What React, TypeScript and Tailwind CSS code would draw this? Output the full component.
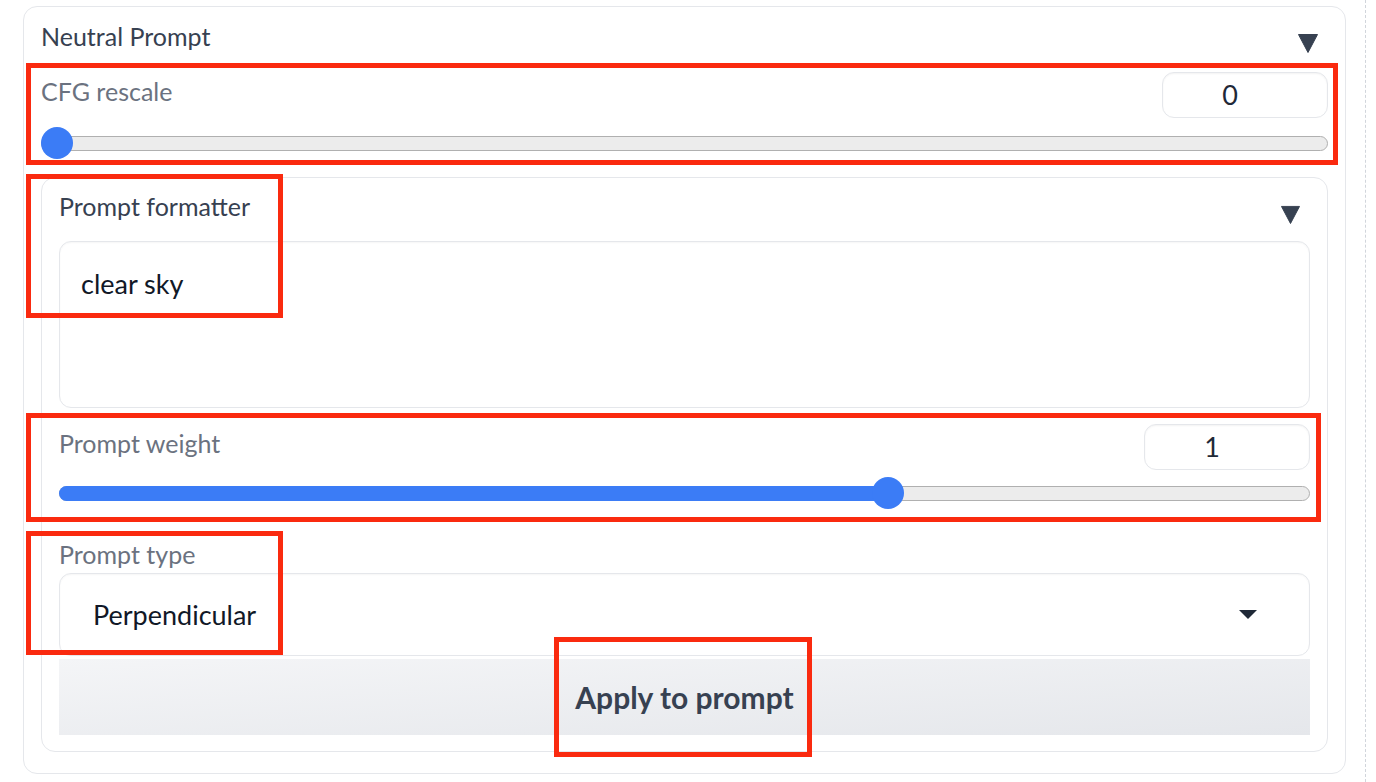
import React from 'react';

const Caret = ({ className }: { className?: string }) => (
  <svg viewBox="0 0 20 20" className={className}>
    <polygon points="0.5,1.5 19.5,1.5 10,19.5" fill="#374151" strokeLinejoin="round" stroke="#374151" strokeWidth="1" />
  </svg>
);

const NumberBox = ({ value }: { value: string }) => (
  <div className="w-[166px] h-[46px] rounded-[12px] border border-[#e5e7eb] shadow-[inset_0_1px_2px_rgba(0,0,0,0.05)] flex items-center justify-center pr-[30px] text-[27px] text-[#1f2937]">
    {value}
  </div>
);

const Slider = ({ pct }: { pct: number }) => (
  <div className="relative h-[32px] flex items-center">
    <div className="w-full h-[15px] rounded-full bg-[#ececec] border-[1.5px] border-[#b0b0b0]" />
    {pct > 0 && (
      <div
        className="absolute left-0 h-[15px] rounded-full bg-[#3b7cf6]"
        style={{ width: `calc(16px + (100% - 32px) * ${pct})` }}
      />
    )}
    <div
      className="absolute top-0 w-[32px] h-[32px] rounded-full bg-[#3b7cf6]"
      style={{ left: `calc((100% - 32px) * ${pct})` }}
    />
  </div>
);

const App: React.FC = () => {
  return (
    <div className="relative w-[1376px] h-[782px] bg-white overflow-hidden font-[Lato,sans-serif] flex">
      <div className="ml-[23px] mt-[6px] self-start w-[1323px] border border-[#e5e7eb] rounded-[14px] px-[17px] pb-[21px] flex flex-col">
        {/* Neutral Prompt header */}
        <div className="flex justify-between h-[58px]">
          <span className="mt-[14px] leading-[30px] text-[25px] text-[#374151]">Neutral Prompt</span>
          <Caret className="w-[20px] h-[20px] mt-[26px] mr-[10px]" />
        </div>

        {/* CFG rescale */}
        <div className="mt-[7px] flex justify-between h-[46px]">
          <span className="mt-[4px] leading-[30px] text-[25px] text-[#6b7280]">CFG rescale</span>
          <NumberBox value="0" />
        </div>
        <div className="mt-[9px]">
          <Slider pct={0} />
        </div>

        {/* Prompt formatter */}
        <div className="mt-[18px] border border-[#e5e7eb] rounded-[14px] px-[17px] pb-[16px] flex flex-col">
          <div className="flex justify-between h-[63px]">
            <span className="mt-[13px] leading-[30px] text-[25px] text-[#374151]">Prompt formatter</span>
            <Caret className="w-[19px] h-[19px] mt-[27px] mr-[10px]" />
          </div>
          <div className="h-[167px] rounded-[12px] border border-[#e5e7eb] shadow-[inset_0_1px_2px_rgba(0,0,0,0.04)] pl-[21px] pt-[27px] text-[27px] leading-[30px] text-[#111827]">
            clear sky
          </div>

          <div className="mt-[16px] flex justify-between h-[46px]">
            <span className="mt-[4px] leading-[30px] text-[25px] text-[#6b7280]">Prompt weight</span>
            <NumberBox value="1" />
          </div>
          <div className="mt-[7px]">
            <Slider pct={0.667} />
          </div>

          <span className="mt-[30px] leading-[30px] text-[25px] text-[#6b7280]">Prompt type</span>
          <div className="mt-[4px] h-[83px] rounded-[12px] border border-[#e5e7eb] shadow-[inset_0_1px_2px_rgba(0,0,0,0.04)] flex items-center justify-between pl-[33px]">
            <span className="text-[27px] leading-[30px] text-[#111827]">Perpendicular</span>
            <svg viewBox="0 0 18 9" className="w-[18px] h-[9px] mr-[52px]">
              <polygon points="0,0 18,0 9,9" fill="#1f2937" />
            </svg>
          </div>
          <button className="mt-[3px] h-[76px] bg-gradient-to-br from-[#f4f5f7] to-[#e5e7eb] text-[30px] font-bold text-[#374151]">
            Apply to prompt
          </button>
        </div>
      </div>

      {/* dashed column divider */}
      <div className="ml-[19px] w-0 h-full border-l border-dashed border-[#d1d5db]" />

      {/* red annotation boxes */}
      <div className="absolute left-[26px] top-[63px] w-[1312px] h-[102px] border-[5px] border-[#fa2a0f]" />
      <div className="absolute left-[26px] top-[174px] w-[257px] h-[144px] border-[5px] border-[#fa2a0f]" />
      <div className="absolute left-[26px] top-[413px] w-[1295px] h-[109px] border-[5px] border-[#fa2a0f]" />
      <div className="absolute left-[26px] top-[531px] w-[257px] h-[124px] border-[5px] border-[#fa2a0f]" />
      <div className="absolute left-[554px] top-[637px] w-[258px] h-[120px] border-[5px] border-[#fa2a0f]" />
    </div>
  );
};

export default App;
